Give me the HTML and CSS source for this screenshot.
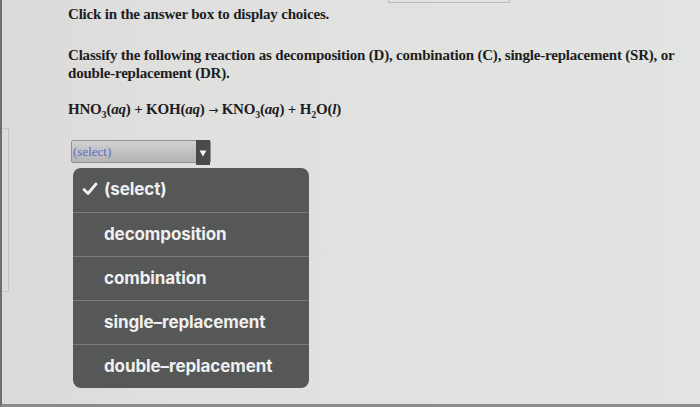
FILE: index.html
```html
<!DOCTYPE html>
<html>
<head>
<meta charset="utf-8">
<link rel="stylesheet" href="styles.css">
</head>
<body>
<div class="screen">
  <div class="topbox"></div>
  <div class="sidebox"></div>
  <div class="content">
    <p class="instr">Click in the answer box to display choices.</p>
    <p class="question">Classify the following reaction as decomposition (D), combination (C), single-replacement (SR), or double-replacement (DR).</p>
    <p class="equation">HNO<sub>3</sub>(<i>aq</i>) + KOH(<i>aq</i>) <span class="arrow">&#8594;</span> KNO<sub>3</sub>(<i>aq</i>) + H<sub>2</sub>O(<i>l</i>)</p>
    <div class="select">
      <span class="select-label">(select)</span>
      <span class="select-btn"><svg width="8" height="8" viewBox="0 0 8 8"><path d="M0.5 1.5 L7.5 1.5 L4 7.5 Z" fill="#f2f2f2"/></svg></span>
    </div>
    <ul class="menu">
      <li class="item checked"><svg class="check" width="16" height="14" viewBox="0 0 16 14"><path d="M2 7.5 L6 11.5 L14 2" fill="none" stroke="#f0f0f0" stroke-width="2.8" stroke-linecap="round" stroke-linejoin="round"/></svg>(select)</li>
      <li class="item">decomposition</li>
      <li class="item">combination</li>
      <li class="item">single&#8211;replacement</li>
      <li class="item">double&#8211;replacement</li>
    </ul>
  </div>
</div>
</body>
</html>
```
FILE: styles.css
```css
html, body {
  margin: 0;
  padding: 0;
}
body {
  width: 700px;
  height: 407px;
  overflow: hidden;
  background: #e1e3e1;
}
.screen {
  position: relative;
  width: 698px;
  height: 404px;
  border-left: 2px solid #6d6d6f;
  border-bottom: 3px solid #8a8b8c;
  background: linear-gradient(90deg, #dcdad9 0%, #e0e1df 30%, #e2e4e2 100%);
}
.topbox {
  position: absolute;
  left: 386px;
  top: 0;
  width: 120px;
  height: 2px;
  border: 1px solid #b9bbba;
  border-top: none;
}
.sidebox {
  position: absolute;
  left: 0;
  top: 128px;
  width: 6px;
  height: 162px;
  border: 1px solid #c4c4c4;
  border-left: none;
}
.content {
  padding: 5px 0 0 66px;
  font-family: "Liberation Serif", "Times New Roman", serif;
  font-weight: bold;
  color: #1d1d1f;
}
.instr {
  margin: 0;
  font-size: 15px;
  line-height: 18px;
  letter-spacing: -0.2px;
}
.question {
  margin: 23px 0 0 0;
  width: 620px;
  font-size: 15px;
  line-height: 18px;
  letter-spacing: -0.2px;
}
.equation {
  margin: 18px 0 0 0;
  font-size: 15px;
  line-height: 18px;
  letter-spacing: -0.2px;
}
.equation sub {
  font-size: 10px;
  line-height: 0;
}
.equation i {
  font-style: italic;
}
.arrow {
  font-family: "DejaVu Sans", sans-serif;
  font-weight: normal;
  font-size: 12px;
}
.select {
  margin: 21px 0 0 3px;
  width: 140px;
  height: 23px;
  display: flex;
  align-items: stretch;
  border: 1px solid #8e9091;
  border-radius: 2px;
  background: linear-gradient(180deg, #d0d1d1 0%, #b3b4b5 100%);
  box-sizing: border-box;
}
.select-label {
  flex: 1;
  padding-left: 1px;
  font-family: "Liberation Serif", serif;
  font-weight: normal;
  font-size: 13px;
  line-height: 21px;
  color: #5e6cc4;
}
.select-btn {
  width: 14px;
  background: #4a4a4c;
  display: flex;
  align-items: center;
  justify-content: center;
  margin-top: -1px;
  margin-bottom: -3px;
}
.menu {
  list-style: none;
  margin: 5px 0 0 5px;
  padding: 0;
  width: 236px;
  background: #565757;
  border-radius: 8px;
  overflow: hidden;
  font-family: Inter, "Noto Sans", sans-serif;
  font-weight: 700;
  font-size: 17px;
  color: #f0f0f0;
}
.item {
  height: 44px;
  line-height: 42px;
  padding-left: 31px;
  border-top: 1px solid #78797a;
  box-sizing: border-box;
  letter-spacing: -0.1px;
}
.item:first-child {
  border-top: none;
}
.item.checked {
  padding-left: 9px;
  display: flex;
  align-items: center;
  padding-bottom: 2px;
}
.check {
  margin-right: 6px;
}
```
